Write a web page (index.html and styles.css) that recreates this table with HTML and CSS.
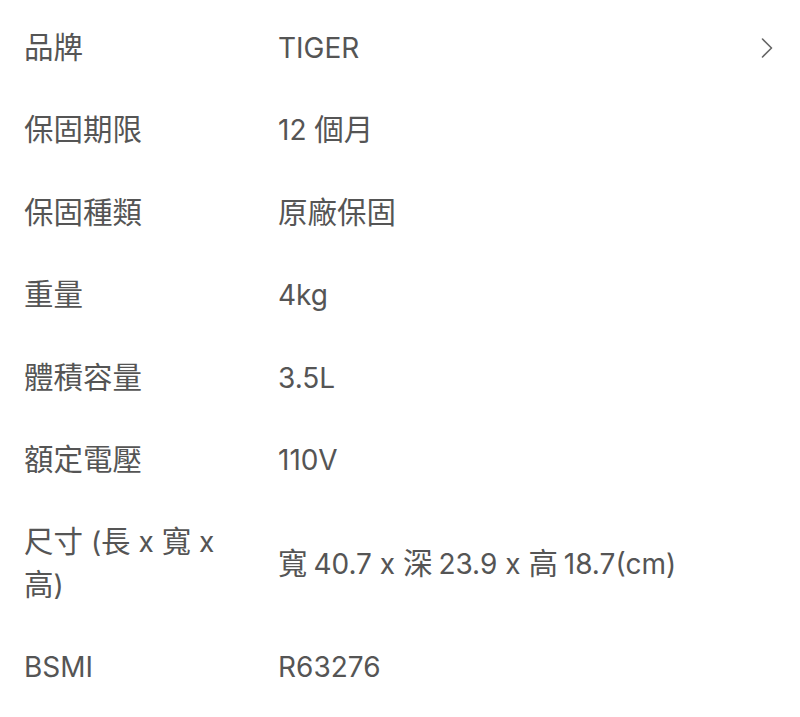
FILE: index.html
```html
<!DOCTYPE html>
<html lang="zh-Hant">
<head>
<meta charset="utf-8">
<link rel="stylesheet" href="styles.css">
</head>
<body>
<div class="specs">
  <div class="row">
    <div class="label"><span class="cjk">品牌</span></div>
    <div class="value">TIGER</div>
    <svg class="chev" width="14" height="22" viewBox="0 0 14 22"><path d="M2.5 2 L11.5 11 L2.5 20" fill="none" stroke="#666" stroke-width="1.6" stroke-linecap="round" stroke-linejoin="round"/></svg>
  </div>
  <div class="row"><div class="label"><span class="cjk">保固期限</span></div><div class="value">12 <span class="cjk">個月</span></div></div>
  <div class="row"><div class="label"><span class="cjk">保固種類</span></div><div class="value"><span class="cjk">原廠保固</span></div></div>
  <div class="row"><div class="label"><span class="cjk">重量</span></div><div class="value">4kg</div></div>
  <div class="row"><div class="label"><span class="cjk">體積容量</span></div><div class="value">3.5L</div></div>
  <div class="row"><div class="label"><span class="cjk">額定電壓</span></div><div class="value">110V</div></div>
  <div class="row"><div class="label"><span class="cjk">尺寸</span> (<span class="cjk">長</span> x <span class="cjk">寬</span> x <span class="cjk">高</span>)</div><div class="value"><span class="cjk">寬</span> 40.7 x <span class="cjk">深</span> 23.9 x <span class="cjk">高</span> 18.7(cm)</div></div>
  <div class="row"><div class="label">BSMI</div><div class="value">R63276</div></div>
</div>
</body>
</html>
```
FILE: styles.css
```css
html, body {
  margin: 0;
  padding: 0;
  background: #fff;
}
body {
  font-family: Inter, "Noto Sans CJK TC", sans-serif;
  font-size: 28px;
  color: #555;
}
.specs {
  padding: 7px 26px 0 24px;
}
.row {
  display: grid;
  grid-template-columns: 220px 1fr auto;
  column-gap: 34px;
  align-items: center;
  padding: 20px 0;
  line-height: 42.4px;
}
.cjk {
  font-family: "Noto Sans CJK TC", sans-serif;
  font-size: 29.5px;
  line-height: 1;
}
.label .cjk + .cjk {
  margin-left: 0;
}
.value .cjk {
  margin-right: -2px;
}
.chev {
  display: block;
}
```
